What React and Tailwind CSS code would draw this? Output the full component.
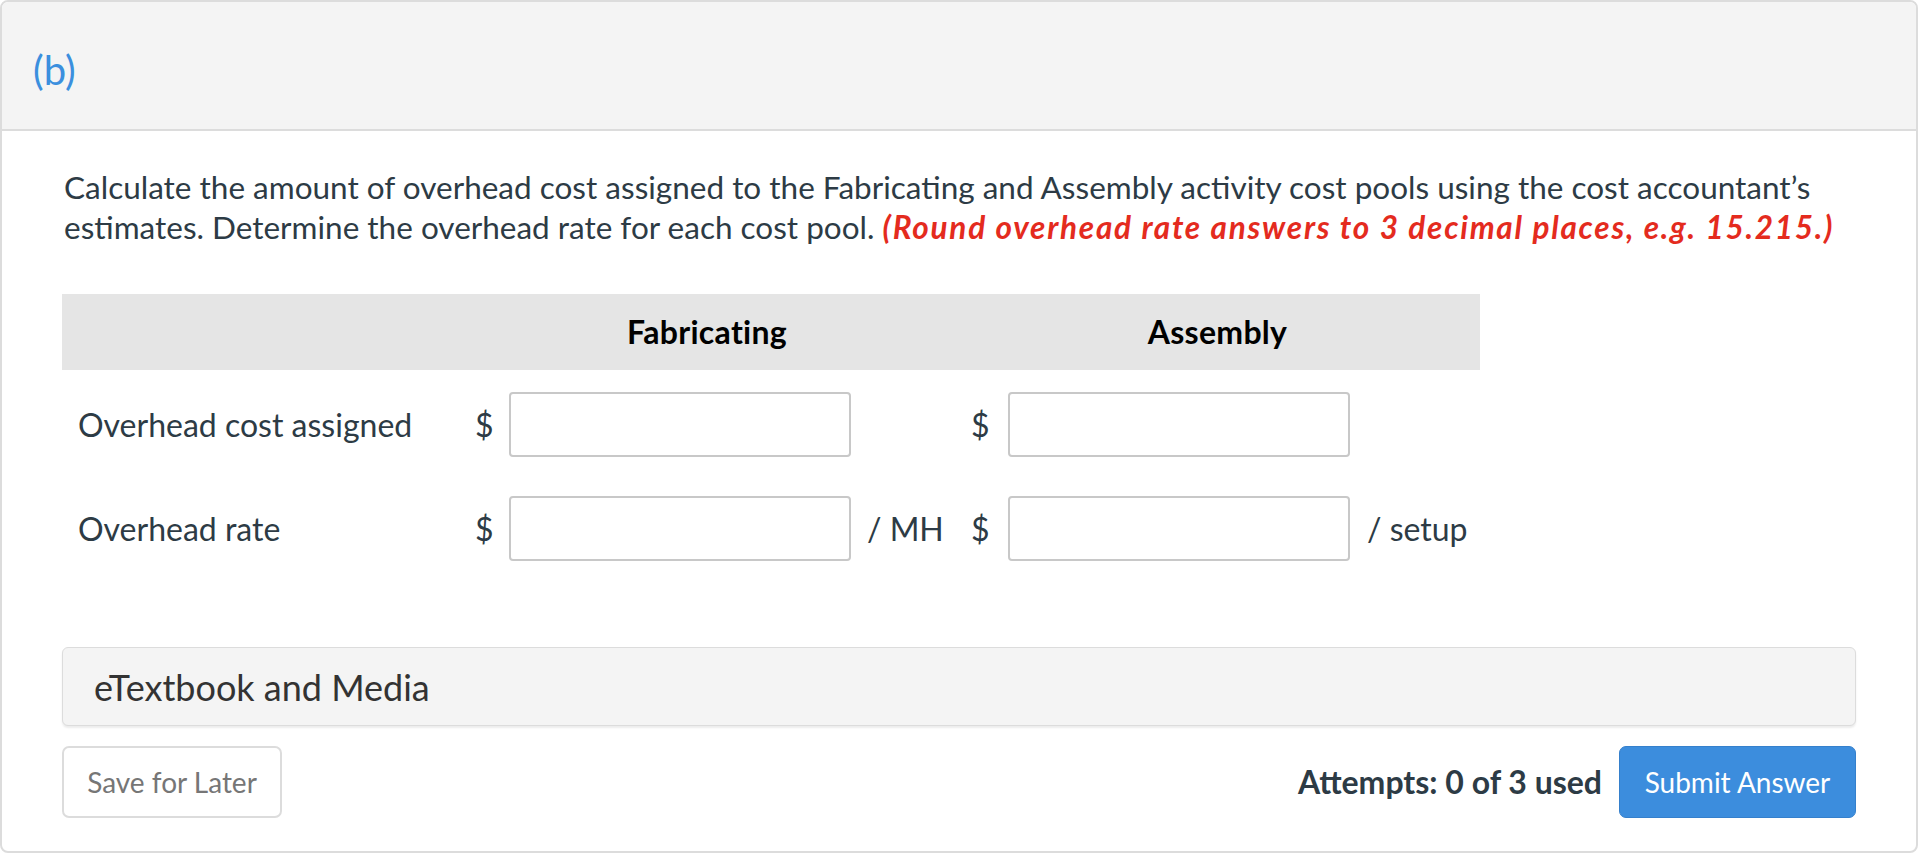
import React from 'react';

function MoneyInput() {
    return (
        <input
            type="text"
            className="w-[342px] h-[65px] border-2 border-[#c8c8c8] rounded-[4px] bg-white px-3 text-[30px] focus:outline-none"
        />
    );
}

export default function App() {
    return (
        <div className="w-[1918px] h-[853px] bg-white font-['Lato',sans-serif] text-[#2d3b45]">
            <div className="h-full border-2 border-[#dcdcdc] rounded-[8px] overflow-hidden flex flex-col">
                {/* part header */}
                <div className="h-[129px] bg-[#f4f4f4] border-b-2 border-[#dcdcdc] flex items-center pl-[31px] pt-[8px]">
                    <span className="text-[40px] text-[#3b8fde]">(b)</span>
                </div>

                <div className="flex-1 px-[60px] pt-[36px] flex flex-col">
                    <p className="text-[31.5px] leading-[40px] pl-[2px]">
                        Calculate the amount of overhead cost assigned to the Fabricating and Assembly activity cost pools using the cost accountant’s estimates. Determine the overhead rate for each cost pool.{' '}
                        <span className="font-bold italic tracking-[1.75px] text-[#e42b1e]">(Round overhead rate answers to 3 decimal places, e.g. 15.215.)</span>
                    </p>

                    {/* table */}
                    <div className="mt-[47px] w-[1418px]">
                        <div className="h-[76px] bg-[#e5e5e5] flex items-center font-bold text-black text-[32px] tracking-[0.3px]">
                            <div className="w-[405px]" />
                            <div className="w-[480px] text-center">Fabricating</div>
                            <div className="w-[533px] text-center pl-[8px]">Assembly</div>
                        </div>

                        <div className="flex items-center mt-[22px] text-[32px]">
                            <div className="w-[405px] pl-[16px]">Overhead cost assigned</div>
                            <div className="w-[480px] flex items-center pl-[8px]">
                                <span className="w-[34px]">$</span>
                                <MoneyInput />
                            </div>
                            <div className="w-[533px] flex items-center pl-[24px]">
                                <span className="w-[37px]">$</span>
                                <MoneyInput />
                            </div>
                        </div>

                        <div className="flex items-center mt-[39px] text-[32px]">
                            <div className="w-[405px] pl-[16px]">Overhead rate</div>
                            <div className="w-[480px] flex items-center pl-[8px]">
                                <span className="w-[34px]">$</span>
                                <MoneyInput />
                                <span className="ml-[16px]">/ MH</span>
                            </div>
                            <div className="w-[533px] flex items-center pl-[24px]">
                                <span className="w-[37px]">$</span>
                                <MoneyInput />
                                <span className="ml-[17px]">/ setup</span>
                            </div>
                        </div>
                    </div>

                    {/* media */}
                    <div className="mt-[86px] h-[79px] bg-[#f4f4f4] border border-[#dcdcdc] rounded-[6px] shadow-[0_2px_2px_rgba(0,0,0,0.08)] flex items-center pl-[31px]">
                        <span className="text-[36px] text-[#333]">eTextbook and Media</span>
                    </div>

                    {/* actions */}
                    <div className="mt-[20px] flex items-center">
                        <button className="w-[220px] h-[72px] border-2 border-[#dcdcdc] rounded-[7px] bg-white text-[28px] text-[#767676]">
                            Save for Later
                        </button>
                        <div className="flex-1" />
                        <span className="font-bold text-[32px] text-[#2d3b45] mr-[17px]">Attempts: 0 of 3 used</span>
                        <button className="w-[237px] h-[72px] rounded-[7px] bg-[#3c8ddd] border border-[#3580cc] text-[28px] text-white">
                            Submit Answer
                        </button>
                    </div>
                </div>
            </div>
        </div>
    );
}
